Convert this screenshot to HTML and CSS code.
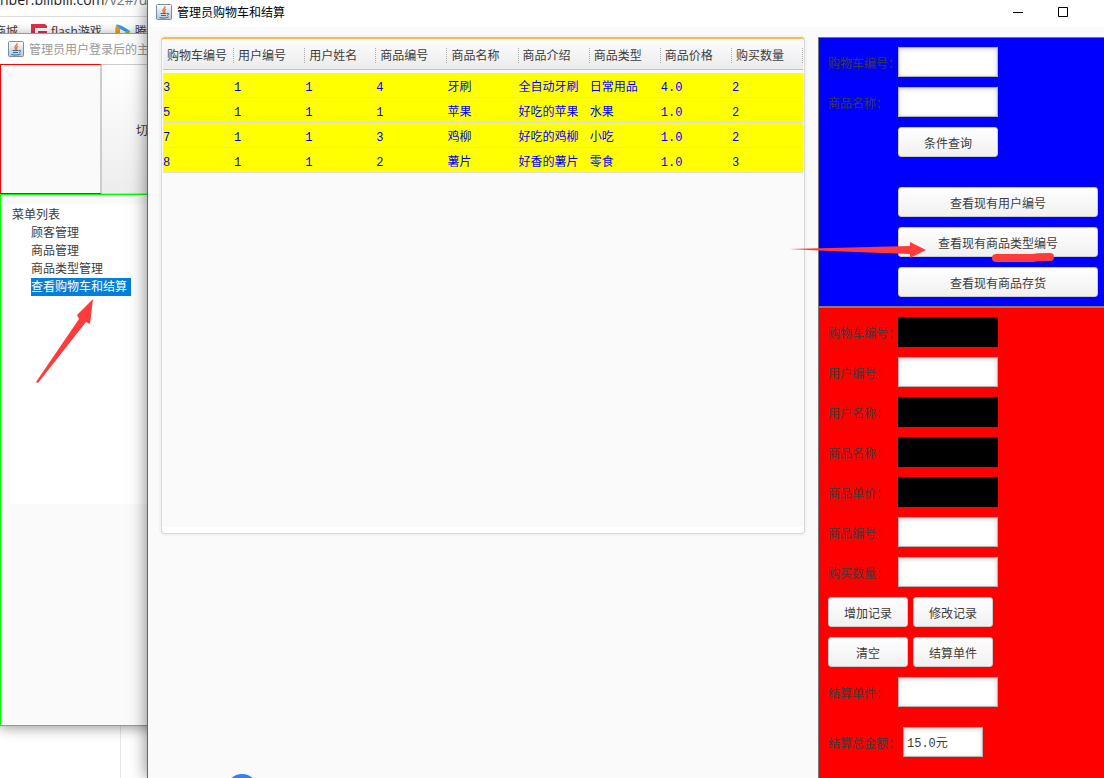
FILE: index.html
```
<!DOCTYPE html>
<html lang="zh-CN">
<head>
    <meta charset="UTF-8">
    <title>管理员购物车和结算</title>
    <link rel="stylesheet" href="styles.css">
</head>
<body>

<svg class="defs" aria-hidden="true">
    <defs>
        <linearGradient id="cupBg" x1="0" y1="0" x2="0" y2="1">
            <stop offset="0" stop-color="#fff"/>
            <stop offset="1" stop-color="#b4c6d4"/>
        </linearGradient>
        <symbol id="java" viewBox="0 0 16 16">
            <rect x="0.5" y="0.5" width="15" height="15" rx="1" fill="url(#cupBg)" stroke="#7590a5"/>
            <path d="M9 2c1 2-3 3-2 5 0 1 1 1 1 2M10 5c-2 1-2 2-1 4" fill="none" stroke="#e8772e" stroke-width="1.3"/>
            <path d="M4.500 9.500h6M5 11.500h5M3.500 13.500c3 1 7 .5 9-.5M11 9.500c2-.8 2.500 1 0 2" fill="none" stroke="#3f6c8e"/>
        </symbol>
    </defs>
</svg>

<!-- browser -->
<div class="browser">
    <div class="url"><span>nber.bilibili.com</span>/v2#/u</div>
    <nav class="marks">
        <a href="#">商城</a>
        <a href="#"><svg width="16" height="16" viewBox="0 0 16 16"><path d="M0 0h14l2 2v2H4v9h8v-3H7V7h9v9H0z" fill="#e2304b"/></svg>flash游戏</a>
        <a href="#"><svg width="16" height="16" viewBox="0 0 16 16"><path d="M1 1l5 3v11l-4 1Q-1 8 1 1z" fill="#fb9a1d"/><path d="M1 1q2-2 14 6l-4 3z" fill="#2fa5ee"/><path d="M15 7q1 1-1 2L3 16l-1-4 9-5z" fill="#7bcb1e"/><path d="M5 5l6 3-6 4z" fill="#fff"/></svg>腾</a>
    </nav>
    <div class="page"></div>
</div>

<!-- menu window -->
<div class="window menu-window">
    <div class="titlebar">
        <svg class="icon"><use href="#java"/></svg>
        <span>管理员用户登录后的主</span>
    </div>
    <div class="toolbar">
        <div class="photo"></div>
        <button type="button" class="switch">切</button>
    </div>
    <div class="menu">
        <div class="tree">
            <div>菜单列表</div>
            <ul>
                <li><a href="#">顾客管理</a></li>
                <li><a href="#">商品管理</a></li>
                <li><a href="#">商品类型管理</a></li>
                <li><a href="#" class="active">查看购物车和结算</a></li>
            </ul>
        </div>
    </div>
</div>

<!-- cart window -->
<div class="window cart-window">
    <div class="titlebar">
        <svg class="icon"><use href="#java"/></svg>
        <span>管理员购物车和结算</span>
        <div class="controls">
            <button type="button" aria-label="最小化"><svg width="10" height="10"><path d="M0 5.500h10" stroke="#000"/></svg></button>
            <button type="button" aria-label="最大化"><svg width="10" height="10"><path d="M.5.5h9v9h-9z" fill="none" stroke="#000"/></svg></button>
        </div>
    </div>
    <div class="content">
        <div class="list">
            <table>
                <thead>
                    <tr><th>购物车编号</th><th>用户编号</th><th>用户姓名</th><th>商品编号</th><th>商品名称</th><th>商品介绍</th><th>商品类型</th><th>商品价格</th><th>购买数量</th></tr>
                </thead>
                <tbody>
                    <tr><td>3</td><td>1</td><td>1</td><td>4</td><td>牙刷</td><td>全自动牙刷</td><td>日常用品</td><td>4.0</td><td>2</td></tr>
                    <tr><td>5</td><td>1</td><td>1</td><td>1</td><td>苹果</td><td>好吃的苹果</td><td>水果</td><td>1.0</td><td>2</td></tr>
                    <tr><td>7</td><td>1</td><td>1</td><td>3</td><td>鸡柳</td><td>好吃的鸡柳</td><td>小吃</td><td>1.0</td><td>2</td></tr>
                    <tr><td>8</td><td>1</td><td>1</td><td>2</td><td>薯片</td><td>好香的薯片</td><td>零食</td><td>1.0</td><td>3</td></tr>
                </tbody>
            </table>
        </div>
        <div class="side">
            <form class="panel search">
                <div class="row"><label for="qcart">购物车编号：</label><input type="text" id="qcart"></div>
                <div class="row"><label for="qname">商品名称：</label><input type="text" id="qname"></div>
                <div class="row indent"><button type="button" class="btn query">条件查询</button></div>
                <div class="row indent space"><button type="button" class="btn wide">查看现有用户编号</button></div>
                <div class="row indent"><button type="button" class="btn wide">查看现有商品类型编号</button></div>
                <div class="row indent"><button type="button" class="btn wide">查看现有商品存货</button></div>
            </form>
            <form class="panel edit">
                <div class="row"><label for="cart">购物车编号：</label><input type="text" id="cart" disabled></div>
                <div class="row"><label for="uid">用户编号：</label><input type="text" id="uid"></div>
                <div class="row"><label for="uname">用户名称：</label><input type="text" id="uname" disabled></div>
                <div class="row"><label for="gname">商品名称：</label><input type="text" id="gname" disabled></div>
                <div class="row"><label for="price">商品单价：</label><input type="text" id="price" disabled></div>
                <div class="row"><label for="gid">商品编号：</label><input type="text" id="gid"></div>
                <div class="row"><label for="num">购买数量：</label><input type="text" id="num"></div>
                <div class="row pair"><button type="button" class="btn">增加记录</button><button type="button" class="btn">修改记录</button></div>
                <div class="row pair"><button type="button" class="btn">清空</button><button type="button" class="btn">结算单件</button></div>
                <div class="row"><label for="one">结算单件：</label><input type="text" id="one"></div>
                <div class="row total"><label for="sum">结算总金额：</label><input type="text" id="sum" value="15.0元"></div>
            </form>
        </div>
    </div>
</div>

<!-- pen marks -->
<svg class="mark mark-menu" width="60" height="88" viewBox="0 0 60 88"><path d="M0 85L43 22l-2-4L57 2l-3 25-4-2L2 86z" fill="#ff3b3b"/></svg>
<svg class="mark mark-button" width="140" height="20" viewBox="0 0 140 20"><path d="M0 8l121-3V1l16 8-16 8v-4L40 10z" fill="#ff3b3b"/></svg>
<svg class="mark mark-line" width="66" height="12" viewBox="0 0 66 12"><path d="M6 7L42 7Q46 6 60 6" fill="none" stroke="#ff3b3b" stroke-width="8" stroke-linecap="round"/></svg>
<div class="ball"></div>

</body>
</html>
```
FILE: styles.css
```
*{box-sizing:border-box}
body{
    position:relative;
    height:100vh;
    margin:0;
    overflow:hidden;
    background:#fff;
    color:#3c3c3c;
    font:12px/18px "Liberation Mono","Noto Sans CJK SC",monospace;
}
button,input{
    font:inherit;
    color:inherit;
}
a{
    color:inherit;
    text-decoration:none;
}
.defs{
    position:absolute;
    width:0;
    height:0;
}

/* browser */
.browser{
    display:flex;
    flex-direction:column;
    height:100%;
    font-family:"Open Sans","Noto Sans CJK SC",sans-serif;
}
.url{
    display:flex;
    align-items:flex-end;
    height:17px;
    padding-bottom:7px;
    border-bottom:1px solid #ddd;
    color:#777;
    font-size:14px;
}
.url span{color:#222}
.marks{
    display:flex;
    gap:13px;
    height:28px;
    padding-top:6px;
    white-space:nowrap;
}
.marks a{
    display:flex;
    align-items:center;
    gap:4px;
    height:18px;
}
.marks a:first-child{margin-left:-6px}
.page{
    flex:1;
    width:121px;
    border-right:1px solid #e3e7ee;
}

/* windows */
.window{
    position:absolute;
    display:flex;
    flex-direction:column;
    background:#fafafa;
}
.titlebar{
    display:flex;
    align-items:center;
    gap:5px;
    padding-left:8px;
    background:#fff;
    white-space:nowrap;
    font-family:"Noto Sans CJK SC",sans-serif;
}
.icon{
    flex:none;
    width:16px;
    height:16px;
}
.menu-window{
    top:33px;
    left:0;
    width:600px;
    height:693px;
    border-top:1px solid #999;
    border-bottom:1px solid #999;
    box-shadow:0 2px 12px rgba(0,0,0,.4);
}
.menu-window .titlebar{
    height:30px;
    color:#999;
}
.toolbar{
    display:flex;
    height:130px;
}
.photo{
    width:102px;
    border:1px solid #f00;
    border-right:2px solid #ccc;
}
.switch{
    flex:1;
    padding:6px 0 0 34px;
    border:1px solid #ccc;
    border-left:0;
    background:linear-gradient(#fff,#ededed);
    text-align:left;
}
.menu{
    flex:1;
    padding:9px;
    border:1px solid #0f0;
    border-bottom:0;
}
.tree{
    height:300px;
    padding:2px;
    background:#fff;
}
.tree ul{
    margin:0;
    padding:0 0 0 19px;
    list-style:none;
}
.tree div,.tree a{
    line-height:20px;
    height:18px;
}
.tree a{
    display:inline-block;
    vertical-align:top;
}
.tree .active{
    width:100px;
    background:#0080dc;
    color:#fff;
}
.tree li{height:18px}

/* cart window */
.cart-window{
    top:0;
    right:0;
    bottom:0;
    left:147px;
    border-left:1px solid #666;
    box-shadow:0 0 16px rgba(0,0,0,.5);
}
.cart-window .titlebar{
    height:27px;
    padding-bottom:4px;
    color:#000;
}
.controls{
    display:flex;
    gap:15px;
    margin-left:auto;
    padding-right:26px;
}
.controls button{
    display:flex;
    justify-content:center;
    width:30px;
    padding:0;
    border:0;
    background:none;
}
.content{
    flex:1;
    display:flex;
    gap:13px;
    padding:10px 0 0 13px;
}
.list{
    flex:1;
    height:497px;
    padding:0 1px;
    border:1px solid #d8d8d8;
    border-top:2px solid #ffb74f;
    border-radius:4px;
    box-shadow:0 0 0 2px #f3f3f3,inset 0 -6px #fff;
}
table{
    width:100%;
    table-layout:fixed;
    border-collapse:separate;
    border-spacing:0;
    white-space:nowrap;
    text-align:left;
}
th{
    height:31px;
    padding:5px 0 0 4px;
    background:linear-gradient(#fdfdfd,#ebebeb);
    border-bottom:1px solid #c4c4c4;
    font-weight:normal;
}
th::after{
    content:"";
    float:right;
    height:15px;
    border-right:1px dotted #aaa;
}
thead::after{
    content:"";
    display:table-row;
    height:3px;
}
td{
    height:25px;
    padding:5px 0 0;
    background:#ff0;
    border-bottom:1px solid #ddd;
    color:#00f;
    font-size:12px;
}

.side{
    display:flex;
    flex-direction:column;
    width:286px;
    border:1px solid #777;
    border-width:1px 0 0 1px;
}
.panel{padding:9px 5px 9px 9px}
.search{
    background:#00f;
    border-bottom:2px solid #808080;
}
.edit{
    flex:1;
    background:#f00;
}
.row{
    display:flex;
    align-items:center;
    height:30px;
    margin-bottom:10px;
}
.row:last-child{margin-bottom:0}
.row label{
    flex:none;
    width:70px;
    padding-top:5px;
    white-space:nowrap;
}
.row input{
    width:100px;
    height:30px;
    padding:0 3px;
    border:1px solid #b4b4b4;
    background:#fff;
    box-shadow:inset 0 1px 4px rgba(0,0,0,.2);
}
.row input:disabled{
    border-color:#000;
    background:#000;
}
.indent{padding-left:70px}
.space{margin-top:30px}
.pair{gap:5px}
.btn{
    width:80px;
    height:30px;
    padding:5px 0 0;
    border:1px solid #ccc;
    border-radius:3px;
    background:linear-gradient(#fff,#f0f0f0);
}
.query{width:100px}
.wide{width:200px}
.total{margin-top:20px}
.row.total label{width:75px}
.row.total input{width:80px}

/* pen marks */
.mark{position:absolute}
.mark-menu{top:297px;left:36px}
.mark-button{top:241px;left:789px}
.mark-line{top:251px;left:990px}
.ball{
    position:absolute;
    bottom:-28px;
    left:226px;
    width:32px;
    height:32px;
    border-radius:50%;
    background:#2f80ff;
}
```
